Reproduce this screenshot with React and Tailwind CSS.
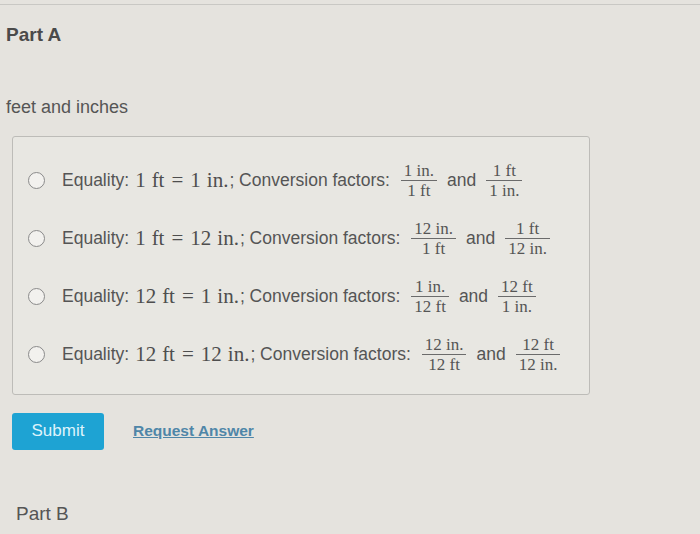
import React from 'react';

const sans = { fontFamily: '"Liberation Sans", Arial, sans-serif' };
const serif = { fontFamily: '"Liberation Serif", "Times New Roman", serif' };

const Frac = ({ num, den }) => (
  <span className="inline-flex flex-col items-center text-[17px] leading-[17px] mx-[6px]" style={serif}>
    <span className="px-[3px] pb-px">{num}</span>
    <span className="border-t border-[#6b6b6b] px-[3px] w-full text-center pt-px">{den}</span>
  </span>
);

const options = [
  { ft: '1', inch: '1', a: ['1 in.', '1 ft'], b: ['1 ft', '1 in.'] },
  { ft: '1', inch: '12', a: ['12 in.', '1 ft'], b: ['1 ft', '12 in.'] },
  { ft: '12', inch: '1', a: ['1 in.', '12 ft'], b: ['12 ft', '1 in.'] },
  { ft: '12', inch: '12', a: ['12 in.', '12 ft'], b: ['12 ft', '12 in.'] },
];

export default function App() {
  return (
    <div className="w-[700px] h-[534px] bg-[#e5e3de] text-[#555555] overflow-hidden" style={sans}>
      <div className="h-[5px] border-b border-[#c9c8c4]" />
      <div className="pl-[6px] pt-[16px] text-[19px] font-bold text-[#4a4a4a]">Part A</div>
      <div className="pl-[6px] pt-[44px] text-[18px] text-[#555555]">feet and inches</div>

      <div className="ml-[12px] mt-[15px] w-[578px] h-[259px] border border-[#bdbcb8] rounded-[3px] bg-[#e8e7e2] pl-[15px] pt-[25px] flex flex-col gap-[20px]">
        {options.map((o, i) => (
          <div key={i} className="flex items-center h-[38px] text-[17.5px]">
            <span className="w-[17px] h-[17px] rounded-full border-[1.5px] border-[#8a8a8a] bg-[#f2f1ee] mr-[17px]" />
            <span>Equality:</span>
            <span className="ml-[6px] mr-[1px] text-[21px] text-[#4e4e4e]" style={serif}>
              {o.ft}<span className="ml-[6px]">ft</span>
              <span className="mx-[7px]">=</span>
              {o.inch}<span className="ml-[6px]">in.</span>
            </span>
            <span>; Conversion factors:&nbsp;</span>
            <Frac num={o.a[0]} den={o.a[1]} />
            <span className="mx-1">and</span>
            <Frac num={o.b[0]} den={o.b[1]} />
          </div>
        ))}
      </div>

      <div className="flex items-center ml-[12px] mt-[18px]">
        <button className="w-[92px] h-[37px] rounded-[3px] bg-[#1ea3d3] text-[#dff3fb] text-[17px]">
          Submit
        </button>
        <span className="ml-[29px] text-[15.5px] font-bold text-[#4f86a8] underline">Request Answer</span>
      </div>

      <div className="pl-[16px] pt-[50px] text-[19px] text-[#555555]">Part B</div>
    </div>
  );
}
